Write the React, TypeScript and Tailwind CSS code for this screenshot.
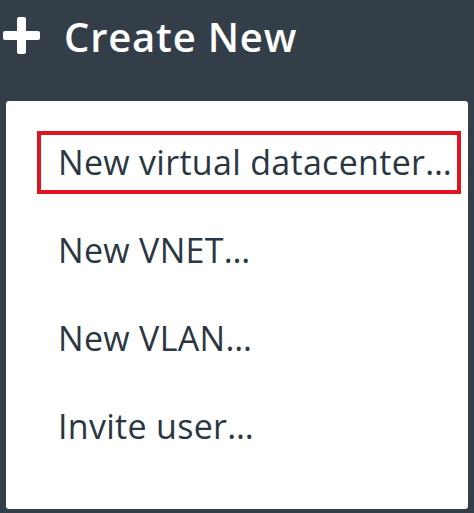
import React from "react";

const items = [
  { label: "New virtual datacenter…", active: true },
  { label: "New VNET…", active: false },
  { label: "New VLAN…", active: false },
  { label: "Invite user…", active: false },
];

export default function App() {
  return (
    <div
      className="w-[474px] h-[513px] bg-[#343e48] overflow-hidden"
      style={{ fontFamily: '"Open Sans", "Noto Sans", sans-serif' }}
    >
      <div className="h-[101px] flex items-start pt-[17px] pl-[3px]">
        <svg width="37" height="37" viewBox="0 0 37 37" className="shrink-0">
          <rect x="14" y="0" width="9" height="37" rx="2" fill="#ffffff" />
          <rect x="0" y="14" width="37" height="9" rx="2" fill="#ffffff" />
        </svg>
        <span className="ml-[24px] text-[40px] leading-[40px] font-semibold tracking-[0.8px] text-white">
          Create New
        </span>
      </div>
      <div className="ml-[6px] w-[462px] h-[408px] bg-white rounded-[3px] pt-[30px] pl-[31px] pr-[7px] flex flex-col gap-[25px]">
        {items.map((it) => (
          <div
            key={it.label}
            className={`h-[63px] border-[4px] pl-[17px] flex items-center ${
              it.active ? "border-[#e0141e]" : "border-transparent"
            }`}
          >
            <span className="text-[34px] leading-[55px] tracking-[0.3px] text-[#2a3641] whitespace-nowrap">
              {it.label}
            </span>
          </div>
        ))}
      </div>
    </div>
  );
}
